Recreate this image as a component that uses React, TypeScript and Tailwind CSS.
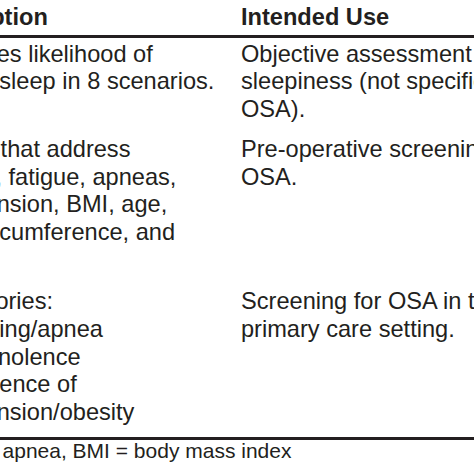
import React from 'react';

// Table rows: every cell is given as its printed lines
const rows = [
    {
        tool: ['Epworth', 'Sleepiness', 'Scale'],
        desc: ['Measures likelihood of', 'falling asleep in 8 scenarios.'],
        use: ['Objective assessment of', 'sleepiness (not specific for', 'OSA).'],
        gap: 'mt-[3px]',
    },
    {
        tool: ['STOP-Bang'],
        desc: [
            '8 items that address',
            'snoring, fatigue, apneas,',
            'hypertension, BMI, age,',
            'neck circumference, and',
            'gender',
        ],
        use: ['Pre-operative screening for', 'OSA.'],
        gap: 'mt-[12px]',
    },
    {
        tool: ['Berlin', 'Question-', 'naire'],
        desc: [
            '3 categories:',
            '(1) snoring/apnea',
            '(2) somnolence',
            '(3) presence of',
            'hypertension/obesity',
        ],
        use: ['Screening for OSA in the', 'primary care setting.'],
        gap: 'mt-[14px]',
    },
];

const Cell = ({ lines }: { lines: string[] }) => (
    <div className="min-w-0">
        {lines.map((line, i) => (
            <div key={i} className="whitespace-pre">{line}</div>
        ))}
    </div>
);

export default function App() {
    return (
        <div className="w-[474px] h-[474px] overflow-hidden bg-white text-[#231f20] font-['Liberation_Sans',Arial,sans-serif]">
            <div className="-ml-[225px] w-[760px]">
                {/* header */}
                <div className="grid grid-cols-[143px_323px_1fr] pt-[4px] pb-[3px] text-[23.6px] leading-[27.7px] font-bold">
                    <div>Tool</div>
                    <div>Description</div>
                    <div>Intended Use</div>
                </div>
                <div className="h-[3px] bg-[#231f20]" />

                {/* body */}
                {rows.map((row, i) => (
                    <div
                        key={i}
                        className={`grid grid-cols-[143px_323px_1fr] text-[23.6px] leading-[27.7px] ${row.gap}`}
                    >
                        <Cell lines={row.tool} />
                        <Cell lines={row.desc} />
                        <Cell lines={row.use} />
                    </div>
                ))}

                <div className="mt-[10px] h-[3px] bg-[#231f20]" />
                <div className="-ml-[3px] text-[21px] leading-[21px] whitespace-nowrap">
                    OSA = obstructive sleep apnea, BMI = body mass index
                </div>
            </div>
        </div>
    );
}
